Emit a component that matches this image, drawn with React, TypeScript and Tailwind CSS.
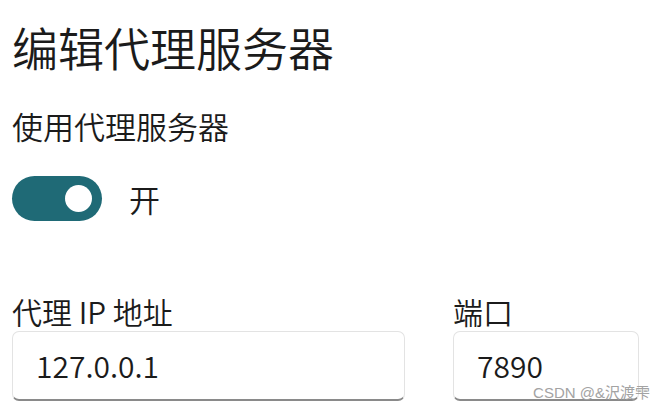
const font = { fontFamily: '"Noto Sans CJK SC", "Noto Sans", sans-serif' };

function Field({ label, value, width }: { label: string; value: string; width: string }) {
  return (
    <div className={`flex flex-col ${width}`}>
      <label className="text-[30px] leading-[36px] font-[350] text-[#1b1b1b]">{label}</label>
      <div className="mt-[2px] h-[70px] rounded-[7px] border border-[#e3e3e3] border-b-2 border-b-[#8a8a8a] bg-white pl-[23px] flex items-center">
        <span className="text-[30px] font-[350] text-[#1b1b1b]">{value}</span>
      </div>
    </div>
  );
}

export default function App() {
  return (
    <div className="relative w-[664px] h-[411px] overflow-hidden bg-white pl-3" style={font}>
      <h1 className="pt-[18px] text-[46px] leading-[56px] font-[350] text-[#1b1b1b]">编辑代理服务器</h1>
      <p className="mt-[32px] text-[31px] leading-[40px] font-[350] text-[#1b1b1b]">使用代理服务器</p>
      <div className="mt-[30px] flex items-center gap-[27px]">
        <div className="w-[90px] h-[45px] rounded-full bg-[#1f6a76] flex items-center justify-end pr-[10px]">
          <div className="w-[27px] h-[27px] rounded-full bg-white" />
        </div>
        <span className="text-[31px] leading-[40px] font-[350] text-[#1b1b1b]">开</span>
      </div>
      <div className="mt-[72px] flex gap-[48px]">
        <Field label="代理 IP 地址" value="127.0.0.1" width="w-[393px]" />
        <Field label="端口" value="7890" width="w-[186px]" />
      </div>
      <span className="absolute right-[14px] bottom-[9px] text-[15px] leading-[18px] text-[#a3a3a3]" style={{ fontFamily: '"Liberation Sans", "Noto Sans CJK JP", sans-serif' }}>
        CSDN @&amp;沢渡雫
      </span>
    </div>
  );
}
